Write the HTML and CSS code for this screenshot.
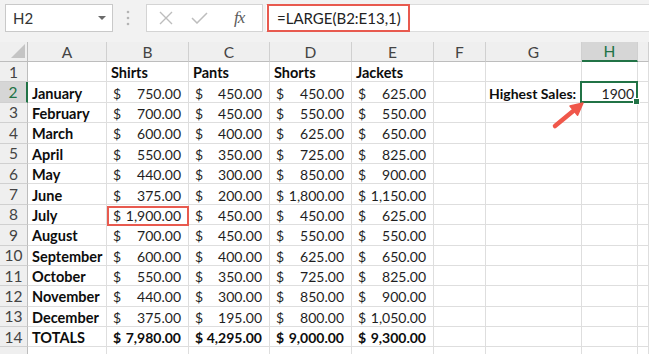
FILE: index.html
```html
<!DOCTYPE html>
<html>
<head>
<meta charset="utf-8">
<link rel="stylesheet" href="styles.css">
</head>
<body>
<div class="app">
  <div class="toolbar">
    <div class="namebox"><span>H2</span><svg class="caret" width="8" height="5" viewBox="0 0 8 5"><path d="M0 0H8L4 4Z" fill="#6a6a6a"/></svg></div>
    <svg class="grip" width="4" height="16" viewBox="0 0 4 16"><circle cx="2" cy="2" r="1.3" fill="#b4b4b4"/><circle cx="2" cy="8" r="1.3" fill="#b4b4b4"/><circle cx="2" cy="14" r="1.3" fill="#b4b4b4"/></svg>
    <div class="fbtns">
      <svg width="16" height="14" viewBox="0 0 16 14"><path d="M2 1L14 13M14 1L2 13" stroke="#bdbdbd" stroke-width="1.4" fill="none"/></svg>
      <svg width="17" height="12" viewBox="0 0 17 12"><path d="M1 6L6 11L16 1" stroke="#bdbdbd" stroke-width="1.5" fill="none"/></svg>
      <span class="fx">fx</span>
    </div>
    <div class="fbar"><div class="formula">=LARGE(B2:E13,1)</div></div>
  </div>
  <div class="sheet">
    <div class="corner"><svg width="14" height="14" viewBox="0 0 14 14"><path d="M14 0V14H0Z" fill="#c4c4c4"/></svg></div>
    <div class="ch">A</div><div class="ch">B</div><div class="ch">C</div><div class="ch">D</div><div class="ch">E</div><div class="ch">F</div><div class="ch">G</div><div class="ch sel">H</div><div class="ch"></div>

    <div class="rh">1</div><div class="c"></div><div class="c b">Shirts</div><div class="c b">Pants</div><div class="c b">Shorts</div><div class="c b">Jackets</div><div class="c"></div><div class="c"></div><div class="c"></div><div class="c"></div>

    <div class="rh sel">2</div><div class="c b">January</div><div class="c n"><span>$</span><span>750.00</span></div><div class="c n"><span>$</span><span>450.00</span></div><div class="c n"><span>$</span><span>450.00</span></div><div class="c n"><span>$</span><span>625.00</span></div><div class="c"></div><div class="c b hs">Highest Sales:</div><div class="c active">1900</div><div class="c"></div>

    <div class="rh">3</div><div class="c b">February</div><div class="c n"><span>$</span><span>700.00</span></div><div class="c n"><span>$</span><span>450.00</span></div><div class="c n"><span>$</span><span>550.00</span></div><div class="c n"><span>$</span><span>550.00</span></div><div class="c"></div><div class="c"></div><div class="c"></div><div class="c"></div>

    <div class="rh">4</div><div class="c b">March</div><div class="c n"><span>$</span><span>600.00</span></div><div class="c n"><span>$</span><span>400.00</span></div><div class="c n"><span>$</span><span>625.00</span></div><div class="c n"><span>$</span><span>650.00</span></div><div class="c"></div><div class="c"></div><div class="c"></div><div class="c"></div>

    <div class="rh">5</div><div class="c b">April</div><div class="c n"><span>$</span><span>550.00</span></div><div class="c n"><span>$</span><span>350.00</span></div><div class="c n"><span>$</span><span>725.00</span></div><div class="c n"><span>$</span><span>825.00</span></div><div class="c"></div><div class="c"></div><div class="c"></div><div class="c"></div>

    <div class="rh">6</div><div class="c b">May</div><div class="c n"><span>$</span><span>440.00</span></div><div class="c n"><span>$</span><span>300.00</span></div><div class="c n"><span>$</span><span>850.00</span></div><div class="c n"><span>$</span><span>900.00</span></div><div class="c"></div><div class="c"></div><div class="c"></div><div class="c"></div>

    <div class="rh">7</div><div class="c b">June</div><div class="c n"><span>$</span><span>375.00</span></div><div class="c n"><span>$</span><span>200.00</span></div><div class="c n"><span>$</span><span>1,800.00</span></div><div class="c n"><span>$</span><span>1,150.00</span></div><div class="c"></div><div class="c"></div><div class="c"></div><div class="c"></div>

    <div class="rh">8</div><div class="c b">July</div><div class="c n hl"><span>$</span><span>1,900.00</span></div><div class="c n"><span>$</span><span>450.00</span></div><div class="c n"><span>$</span><span>450.00</span></div><div class="c n"><span>$</span><span>625.00</span></div><div class="c"></div><div class="c"></div><div class="c"></div><div class="c"></div>

    <div class="rh">9</div><div class="c b">August</div><div class="c n"><span>$</span><span>700.00</span></div><div class="c n"><span>$</span><span>450.00</span></div><div class="c n"><span>$</span><span>550.00</span></div><div class="c n"><span>$</span><span>550.00</span></div><div class="c"></div><div class="c"></div><div class="c"></div><div class="c"></div>

    <div class="rh">10</div><div class="c b">September</div><div class="c n"><span>$</span><span>600.00</span></div><div class="c n"><span>$</span><span>400.00</span></div><div class="c n"><span>$</span><span>625.00</span></div><div class="c n"><span>$</span><span>650.00</span></div><div class="c"></div><div class="c"></div><div class="c"></div><div class="c"></div>

    <div class="rh">11</div><div class="c b">October</div><div class="c n"><span>$</span><span>550.00</span></div><div class="c n"><span>$</span><span>350.00</span></div><div class="c n"><span>$</span><span>725.00</span></div><div class="c n"><span>$</span><span>825.00</span></div><div class="c"></div><div class="c"></div><div class="c"></div><div class="c"></div>

    <div class="rh">12</div><div class="c b">November</div><div class="c n"><span>$</span><span>440.00</span></div><div class="c n"><span>$</span><span>300.00</span></div><div class="c n"><span>$</span><span>850.00</span></div><div class="c n"><span>$</span><span>900.00</span></div><div class="c"></div><div class="c"></div><div class="c"></div><div class="c"></div>

    <div class="rh">13</div><div class="c b">December</div><div class="c n"><span>$</span><span>375.00</span></div><div class="c n"><span>$</span><span>195.00</span></div><div class="c n"><span>$</span><span>800.00</span></div><div class="c n"><span>$</span><span>1,050.00</span></div><div class="c"></div><div class="c"></div><div class="c"></div><div class="c"></div>

    <div class="rh">14</div><div class="c b">TOTALS</div><div class="c n b"><span>$</span><span>7,980.00</span></div><div class="c n b"><span>$</span><span>4,295.00</span></div><div class="c n b"><span>$</span><span>9,000.00</span></div><div class="c n b"><span>$</span><span>9,300.00</span></div><div class="c"></div><div class="c"></div><div class="c"></div><div class="c"></div>

    <div class="rh"></div><div class="c"></div><div class="c"></div><div class="c"></div><div class="c"></div><div class="c"></div><div class="c"></div><div class="c"></div><div class="c"></div><div class="c"></div>

    <svg class="arrow" width="50" height="40" viewBox="0 0 50 40"><path d="M15 31L35 14.5" stroke="#f0574a" stroke-width="4.5" stroke-linecap="round"/><path d="M43 8L37.6 20.3L30 11.1Z" fill="#f0574a" stroke="#f0574a" stroke-width="1.5" stroke-linejoin="round"/></svg>
  </div>
</div>
</body>
</html>
```

FILE: styles.css
```css
* { box-sizing: border-box; }
html, body { margin: 0; padding: 0; }
body {
  width: 649px;
  height: 354px;
  overflow: hidden;
  background: #ffffff;
  font-family: Lato, "Liberation Sans", sans-serif;
  color: #222;
}
.app { width: 649px; height: 354px; overflow: hidden; }

.toolbar {
  height: 42px;
  background: #f2f2f2;
  display: flex;
  align-items: flex-start;
  padding-top: 4px;
}
.namebox {
  margin-left: 5px;
  width: 108px;
  height: 28px;
  background: #fff;
  border: 1px solid #c9c9c9;
  display: flex;
  align-items: center;
  justify-content: space-between;
  padding: 0 6px 0 7px;
  font-size: 15px;
  color: #333;
}
.caret { margin-top: 1px; }
.grip { margin: 6px 0 0 13px; }
.fbtns {
  margin-left: 16px;
  width: 117px;
  height: 28px;
  background: #fff;
  border: 1px solid #d4d4d4;
  display: flex;
  align-items: center;
  padding-left: 11px;
  gap: 20px;
}
.fbtns svg:nth-child(2) { margin-left: -3px; }
.fx {
  font-family: "Liberation Serif", serif;
  font-style: italic;
  font-size: 17px;
  color: #5a5a5a;
  margin-left: 6px;
  letter-spacing: -1px;
}
.fbar {
  flex: 1;
  height: 28px;
  margin-left: 3px;
  background: #fff;
  border-top: 1px solid #dcdcdc;
  border-bottom: 1px solid #dcdcdc;
  display: flex;
}
.formula {
  margin-top: -1px;
  margin-left: 1px;
  width: 143px;
  height: 28px;
  border: 2px solid #e85a4f;
  display: flex;
  align-items: center;
  padding-left: 8px;
  font-size: 15px;
  color: #222;
}

.sheet {
  position: relative;
  display: grid;
  grid-template-columns: 28px 79px 82px 81px 82px 82px 52px 96px 56px 11px;
  grid-template-rows: 20px repeat(15, 20.4px);
  background: #fff;
}
.corner, .ch, .rh {
  background: #efefef;
  color: #444;
  display: flex;
  align-items: center;
  justify-content: center;
}
.corner {
  border-right: 1px solid #bdbdbd;
  border-bottom: 1px solid #bdbdbd;
  align-items: flex-end;
  justify-content: flex-end;
  padding: 0 2px 3px 0;
}
.ch {
  font-size: 15.5px;
  border-right: 1px solid #d0d0d0;
  border-bottom: 1px solid #bdbdbd;
}
.ch.sel {
  background: #d6d6d6;
  color: #217346;
  border-bottom: 2px solid #217346;
}
.rh {
  font-size: 15.5px;
  border-right: 1px solid #bdbdbd;
  border-bottom: 1px solid #d0d0d0;
}
.rh.sel {
  background: #d6d6d6;
  color: #217346;
  border-right: 2px solid #217346;
}
.c {
  border-right: 1px solid #dedede;
  border-bottom: 1px solid #dedede;
  font-size: 14.5px;
  display: flex;
  align-items: center;
  padding: 2px 4px 0 4px;
  white-space: nowrap;
  color: #1e1e1e;
}
.c.b { font-weight: 700; color: #0d0d0d; }
.c.n {
  font-size: 14px;
  justify-content: space-between;
  padding: 2px 7px 0 6px;
}
.c.hs { overflow: visible; padding-left: 3px; font-size: 14px; }
.c.active {
  position: relative;
  justify-content: flex-end;
  padding-right: 3px;
  font-size: 14px;
}
.c.active::after {
  content: "";
  position: absolute;
  left: -2px; top: -1px; right: -1px; bottom: -1px;
  border: 2px solid #217346;
}
.c.active::before {
  content: "";
  position: absolute;
  right: -3px; bottom: -3px;
  width: 5px; height: 5px;
  background: #217346;
  border: 1px solid #fff;
  z-index: 2;
}
.c.hl { position: relative; }
.c.hl::after {
  content: "";
  position: absolute;
  left: 0; top: 1px; right: -1px; bottom: -2px;
  border: 2px solid #e85a4f;
}
.arrow {
  position: absolute;
  left: 540px;
  top: 53px;
}
```
